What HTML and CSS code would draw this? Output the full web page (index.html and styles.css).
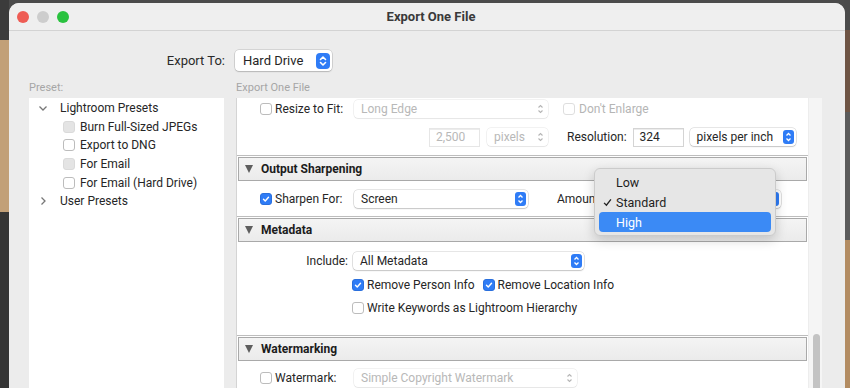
FILE: index.html
```html
<!DOCTYPE html>
<html lang="en">
<head>
    <meta charset="UTF-8">
    <title>Export One File</title>
    <link rel="stylesheet" href="styles.css">
</head>
<body>
    <div class="window">
        <!-- Title bar -->
        <div class="titlebar">
            <div class="lights">
                <span class="light red"></span>
                <span class="light idle"></span>
                <span class="light green"></span>
            </div>
            <div class="title">Export One File</div>
            <div></div>
        </div>

        <div class="content">
            <!-- Export To -->
            <div class="export-label">Export To:</div>
            <div class="export-target">
                <div class="popup popup-large">
                    <span>Hard Drive</span>
                    <svg class="stepper big" viewBox="0 0 14 16"><rect width="14" height="16" rx="4" fill="#2f7cf6"/><path d="M4.5 6.5 7 4l2.5 2.5M4.5 9.5 7 12l2.5-2.5" fill="none" stroke="#fff" stroke-width="1.6" stroke-linecap="round" stroke-linejoin="round"/></svg>
                </div>
            </div>

            <div class="caption">Preset:</div>
            <div class="caption">Export One File</div>

            <!-- Preset tree -->
            <div class="presets">
                <div class="tree-row">
                    <svg class="chevron" viewBox="0 0 10 10"><path d="M1.5 3.5 5 7l3.5-3.5" fill="none" stroke="#777" stroke-width="1.3"/></svg>
                    <span>Lightroom Presets</span>
                </div>
                <div class="tree-row child"><span class="cb dim"></span><span>Burn Full-Sized JPEGs</span></div>
                <div class="tree-row child"><span class="cb"></span><span>Export to DNG</span></div>
                <div class="tree-row child"><span class="cb dim"></span><span>For Email</span></div>
                <div class="tree-row child"><span class="cb"></span><span>For Email (Hard Drive)</span></div>
                <div class="tree-row">
                    <svg class="chevron" viewBox="0 0 10 10"><path d="M3.5 1.5 7 5l-3.5 3.5" fill="none" stroke="#777" stroke-width="1.3"/></svg>
                    <span>User Presets</span>
                </div>
            </div>

            <!-- Settings panel -->
            <div class="settings">
                <div class="scroll-area">
                    <!-- Image sizing (scrolled) -->
                    <div class="sizing">
                        <div class="row">
                            <span class="cb"></span>
                            <span class="field-label">Resize to Fit:</span>
                            <div class="popup off w-long"><span>Long Edge</span><svg class="stepper" viewBox="0 0 11 14"><path d="M3.5 5.5 5.5 3.5l2 2M3.5 8.5l2 2 2-2" fill="none" stroke="#b5b5b5" stroke-width="1.1"/></svg></div>
                            <span class="cb dim-box enlarge"></span>
                            <span class="muted">Don't Enlarge</span>
                        </div>
                        <div class="row">
                            <div class="field off first">2,500</div>
                            <div class="popup off w-pixels"><span>pixels</span><svg class="stepper" viewBox="0 0 11 14"><path d="M3.5 5.5 5.5 3.5l2 2M3.5 8.5l2 2 2-2" fill="none" stroke="#b5b5b5" stroke-width="1.1"/></svg></div>
                            <span class="res-label">Resolution:</span>
                            <div class="field">324</div>
                            <div class="popup w-ppi"><span>pixels per inch</span><svg class="stepper" viewBox="0 0 11 14"><rect width="11" height="14" rx="3" fill="#2f7cf6"/><path d="M3.5 5.5 5.5 3.5l2 2M3.5 8.5l2 2 2-2" fill="none" stroke="#fff" stroke-width="1.3"/></svg></div>
                        </div>
                    </div>

                    <!-- Output Sharpening -->
                    <div class="section">
                        <div class="section-head"><span class="tri"></span>Output Sharpening</div>
                        <div class="section-body indent sharpen">
                            <div class="row">
                                <span class="cb on"><svg viewBox="0 0 12 12"><path d="M3 6.2 5.1 8.3 9 3.8" fill="none" stroke="#fff" stroke-width="1.7" stroke-linecap="round" stroke-linejoin="round"/></svg></span>
                                <span class="field-label">Sharpen For:</span>
                                <div class="popup w-screen"><span>Screen</span><svg class="stepper" viewBox="0 0 11 14"><rect width="11" height="14" rx="3" fill="#2f7cf6"/><path d="M3.5 5.5 5.5 3.5l2 2M3.5 8.5l2 2 2-2" fill="none" stroke="#fff" stroke-width="1.3"/></svg></div>
                                <span class="amount-label">Amount:</span>
                                <div class="popup w-amount"><span></span><svg class="stepper" viewBox="0 0 11 14"><rect width="11" height="14" rx="3" fill="#2f7cf6"/><path d="M3.5 5.5 5.5 3.5l2 2M3.5 8.5l2 2 2-2" fill="none" stroke="#fff" stroke-width="1.3"/></svg></div>
                            </div>
                        </div>
                    </div>

                    <!-- Metadata -->
                    <div class="section">
                        <div class="section-head"><span class="tri"></span>Metadata</div>
                        <div class="section-body metadata">
                            <div class="row">
                                <span class="include-label">Include:</span>
                                <div class="popup w-meta"><span>All Metadata</span><svg class="stepper" viewBox="0 0 11 14"><rect width="11" height="14" rx="3" fill="#2f7cf6"/><path d="M3.5 5.5 5.5 3.5l2 2M3.5 8.5l2 2 2-2" fill="none" stroke="#fff" stroke-width="1.3"/></svg></div>
                            </div>
                            <div class="row check-row">
                                <span class="cb on"><svg viewBox="0 0 12 12"><path d="M3 6.2 5.1 8.3 9 3.8" fill="none" stroke="#fff" stroke-width="1.7" stroke-linecap="round" stroke-linejoin="round"/></svg></span>
                                <span class="cb-text">Remove Person Info</span>
                                <span class="cb on second"><svg viewBox="0 0 12 12"><path d="M3 6.2 5.1 8.3 9 3.8" fill="none" stroke="#fff" stroke-width="1.7" stroke-linecap="round" stroke-linejoin="round"/></svg></span>
                                <span class="cb-text">Remove Location Info</span>
                            </div>
                            <div class="row check-row last">
                                <span class="cb"></span>
                                <span class="cb-text">Write Keywords as Lightroom Hierarchy</span>
                            </div>
                        </div>
                    </div>

                    <!-- Watermarking -->
                    <div class="section">
                        <div class="section-head"><span class="tri"></span>Watermarking</div>
                        <div class="section-body indent watermark">
                            <div class="row">
                                <span class="cb"></span>
                                <span class="field-label">Watermark:</span>
                                <div class="popup off w-mark"><span>Simple Copyright Watermark</span><svg class="stepper" viewBox="0 0 11 14"><path d="M3.5 5.5 5.5 3.5l2 2M3.5 8.5l2 2 2-2" fill="none" stroke="#b5b5b5" stroke-width="1.1"/></svg></div>
                            </div>
                        </div>
                    </div>
                </div>

                <div class="scrollbar"><div class="thumb"></div></div>

                <!-- Open Amount menu -->
                <div class="menu">
                    <div class="menu-item"><span class="check"></span>Low</div>
                    <div class="menu-item"><span class="check"><svg viewBox="0 0 10 10"><path d="M1.2 5.4 3.8 8 8.8 1.6" fill="none" stroke="#222" stroke-width="1.5"/></svg></span>Standard</div>
                    <div class="menu-item active"><span class="check"></span>High</div>
                </div>
            </div>
        </div>
    </div>
</body>
</html>
```

FILE: styles.css
```css
/* Basic Reset */
* {
    margin: 0;
    padding: 0;
    box-sizing: border-box;
}

body {
    width: 850px;
    height: 388px;
    overflow: hidden;
    font-family: Roboto, "Liberation Sans", sans-serif;
    font-size: 12px;
    color: #262626;
    background:
        linear-gradient(#3b3b3b 0 40px, #c2a078 40px 212px, #353535 212px) left / 9px 100% no-repeat,
        linear-gradient(#4a4a4a 0 30px, #6e5444 30px 112px, #5a5a5a 112px 240px, #b38c62 240px) right / 6px 100% no-repeat,
        #4b4b4b;
}

/* Window */
.window {
    margin: 3px 5px 0 9px;
    height: 385px;
    background-color: #ececec;
    border-radius: 10px 10px 0 0;
    overflow: hidden;
    display: flex;
    flex-direction: column;
}

.titlebar {
    height: 28px;
    flex-shrink: 0;
    display: grid;
    grid-template-columns: 1fr auto 1fr;
    align-items: center;
    padding-left: 8px;
    background-color: #efefef;
    border-bottom: 1px solid #d3d3d3;
}

.lights {
    display: flex;
    gap: 8px;
}

.light {
    width: 12px;
    height: 12px;
    border-radius: 50%;
}

.light.red { background-color: #ee5c54; }
.light.idle { background-color: #cdcdcd; }
.light.green { background-color: #2ac23f; }

.title {
    font-weight: 700;
    font-size: 13px;
    color: #3a3a3a;
}

/* Main grid */
.content {
    flex: 1;
    min-height: 0;
    display: grid;
    grid-template-columns: 195px 586px;
    grid-template-rows: auto auto 1fr;
    column-gap: 12px;
    padding: 19px 23px 0 20px;
}

.export-label {
    text-align: right;
    font-size: 13px;
    line-height: 21px;
    color: #2a2a2a;
    margin-right: -1px;
}

.export-target {
    margin-left: -1px;
}

.caption {
    margin-top: 10px;
    font-size: 11px;
    line-height: 13px;
    color: #a6a6a6;
}

/* Preset list */
.presets {
    margin-top: 4px;
    background-color: #fff;
    padding-top: 1px;
}

.tree-row {
    height: 18.6px;
    display: flex;
    align-items: center;
    padding-left: 9px;
}

.tree-row .chevron {
    width: 10px;
    height: 10px;
    margin-right: 12px;
}

.tree-row.child {
    padding-left: 34px;
}

.tree-row.child .cb {
    margin-right: 5px;
}

/* Checkboxes */
.cb {
    width: 12px;
    height: 12px;
    flex-shrink: 0;
    border: 1px solid #bcbcbc;
    border-radius: 3px;
    background-color: #fff;
    display: flex;
}

.cb.dim {
    background-color: #e4e4e4;
    border-color: #dadada;
}

.cb.dim-box {
    border-color: #dedede;
}

.cb.on {
    background-color: #2f7cf6;
    border-color: #2a6fdc;
}

.cb svg {
    width: 10px;
    height: 10px;
}

/* Settings panel */
.settings {
    margin-top: 4px;
    position: relative;
    display: flex;
    background-color: #fff;
    border-left: 1px solid #d4d4d4;
    overflow: hidden;
}

.scroll-area {
    flex: 1;
}

.scrollbar {
    width: 14px;
    display: flex;
    flex-direction: column;
    justify-content: flex-end;
    padding-left: 4px;
    background-color: #f5f5f5;
    border-left: 1px solid #ededed;
}

.thumb {
    width: 7px;
    height: 60px;
    margin-bottom: -6px;
    border-radius: 4px;
    background-color: #c3c3c3;
}

.row {
    height: 20px;
    display: flex;
    align-items: center;
}

.field-label {
    width: 79px;
    margin-left: 3px;
    flex-shrink: 0;
}

.muted {
    color: #b5b5b5;
    margin-left: 4px;
}

/* Popup buttons */
.popup {
    height: 18px;
    display: flex;
    align-items: center;
    justify-content: space-between;
    padding: 0 2px 0 7px;
    background-color: #fff;
    border-radius: 4px;
    box-shadow: 0 0 0 0.5px rgba(0, 0, 0, 0.2), 0 1px 1.5px rgba(0, 0, 0, 0.14);
    flex-shrink: 0;
    white-space: nowrap;
}

.popup.off {
    color: #b8b8b8;
    box-shadow: 0 0 0 0.5px rgba(0, 0, 0, 0.1), 0 1px 1px rgba(0, 0, 0, 0.05);
}

.popup-large {
    width: 97px;
    height: 21px;
    font-size: 13px;
    padding-left: 8px;
}

.stepper {
    width: 11px;
    height: 14px;
}

.stepper.big {
    width: 14px;
    height: 16px;
}

.w-long { width: 194px; }
.w-pixels { width: 61px; margin-left: 7px; }
.w-ppi { width: 106px; margin-left: 6px; }
.w-screen { width: 174px; }
.w-amount { width: 173px; margin-left: 6px; }
.w-meta { width: 231px; margin-left: 5px; }
.w-mark { width: 223px; }

.enlarge {
    margin-left: 15px;
}

/* Text fields */
.field {
    width: 51px;
    height: 19px;
    display: flex;
    align-items: center;
    padding-left: 6px;
    background-color: #fff;
    border: 1px solid #d4d4d4;
    box-shadow: inset 0 1px 0 #ececec;
}

.field.off {
    color: #b8b8b8;
    border-color: #e6e6e6;
}

.field.first {
    margin-left: 169px;
}

.res-label {
    margin-left: 19px;
    margin-right: 6px;
}

/* Sections */
.sizing {
    display: flex;
    flex-direction: column;
    gap: 8px;
    padding: 1px 0 8px 23px;
}

.section {
    border-top: 1px solid #bdbdbd;
    padding-top: 1px;
}

.section-head {
    height: 24px;
    margin: 0 1px;
    display: flex;
    align-items: center;
    padding-left: 6px;
    font-weight: 700;
    color: #1c1c1c;
    background: linear-gradient(#f4f4f4, #ebebeb);
    border: 1px solid #a9a9a9;
}

.tri {
    width: 0;
    height: 0;
    margin-right: 8px;
    border-left: 4.5px solid transparent;
    border-right: 4.5px solid transparent;
    border-top: 8px solid #5e5e5e;
}

.section-body.indent {
    padding-left: 23px;
}

.sharpen {
    padding-top: 8px;
    padding-bottom: 7px;
}

.amount-label {
    margin-left: 29px;
}

.metadata {
    padding: 9px 0 19px 0;
}

.include-label {
    width: 111px;
    text-align: right;
}

.check-row {
    height: 16px;
    margin-top: 6px;
    padding-left: 115px;
}

.check-row.last {
    margin-top: 7px;
}

.cb-text {
    margin-left: 3px;
}

.cb.second {
    margin-left: 8px;
}

.watermark {
    padding-top: 7px;
}

/* Amount menu */
.menu {
    position: absolute;
    left: 357px;
    top: 70px;
    width: 182px;
    height: 68px;
    padding-top: 3px;
    background-color: #e6e6e6;
    border: 1px solid #cbcbcb;
    border-radius: 6px;
    box-shadow: 0 4px 12px rgba(0, 0, 0, 0.18);
    font-size: 12.5px;
}

.menu-item {
    height: 20px;
    margin: 0 4px;
    display: flex;
    align-items: center;
    border-radius: 4px;
    color: #1e1e1e;
}

.menu-item.active {
    background-color: #3b8af5;
    color: #fff;
}

.check {
    width: 17px;
    padding-left: 4px;
    display: flex;
}

.check svg {
    width: 9px;
    height: 9px;
}
```
